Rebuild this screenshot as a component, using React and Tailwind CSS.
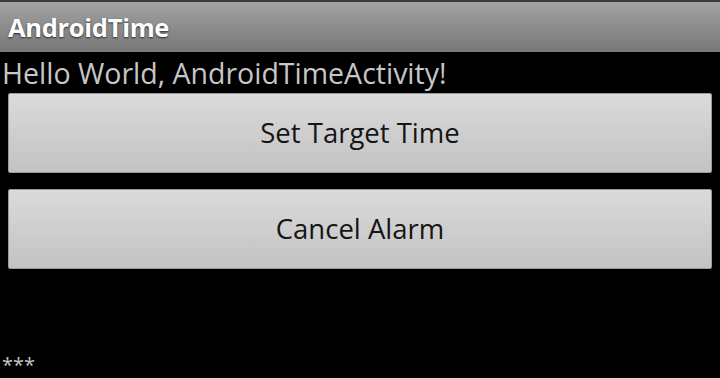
export default function App() {
  return (
    <div className="w-[720px] h-[378px] overflow-hidden bg-black flex flex-col font-['Open_Sans',sans-serif]">
      <div className="h-[52px] shrink-0 border-t-2 border-[#3a3a3a] bg-gradient-to-b from-[#a3a3a3] to-[#777777] flex items-center px-2">
        <span className="text-white font-bold text-[25.5px] tracking-[-0.3px] [text-shadow:0_1px_2px_rgba(0,0,0,0.7)]">AndroidTime</span>
      </div>
      <div className="px-[2px] pt-[3px] h-[38px] shrink-0 text-[#c6c6c6] text-[28.5px] leading-[36px] whitespace-nowrap">
        Hello World, AndroidTimeActivity!
      </div>
      <div className="flex flex-col gap-4 px-2 pt-[3px]">
        <button className="h-[80px] w-full rounded-[2px] border border-[#9a9a9a] bg-gradient-to-b from-[#dadada] to-[#c3c3c3] text-[#151515] text-[27.5px]">
          Set Target Time
        </button>
        <button className="h-[80px] w-full rounded-[2px] border border-[#9a9a9a] bg-gradient-to-b from-[#dadada] to-[#c3c3c3] text-[#151515] text-[27.5px]">
          Cancel Alarm
        </button>
      </div>
      <div className="mt-auto px-[2px] shrink-0 text-[#c6c6c6] text-[20px] leading-[27px]">***</div>
    </div>
  );
}
